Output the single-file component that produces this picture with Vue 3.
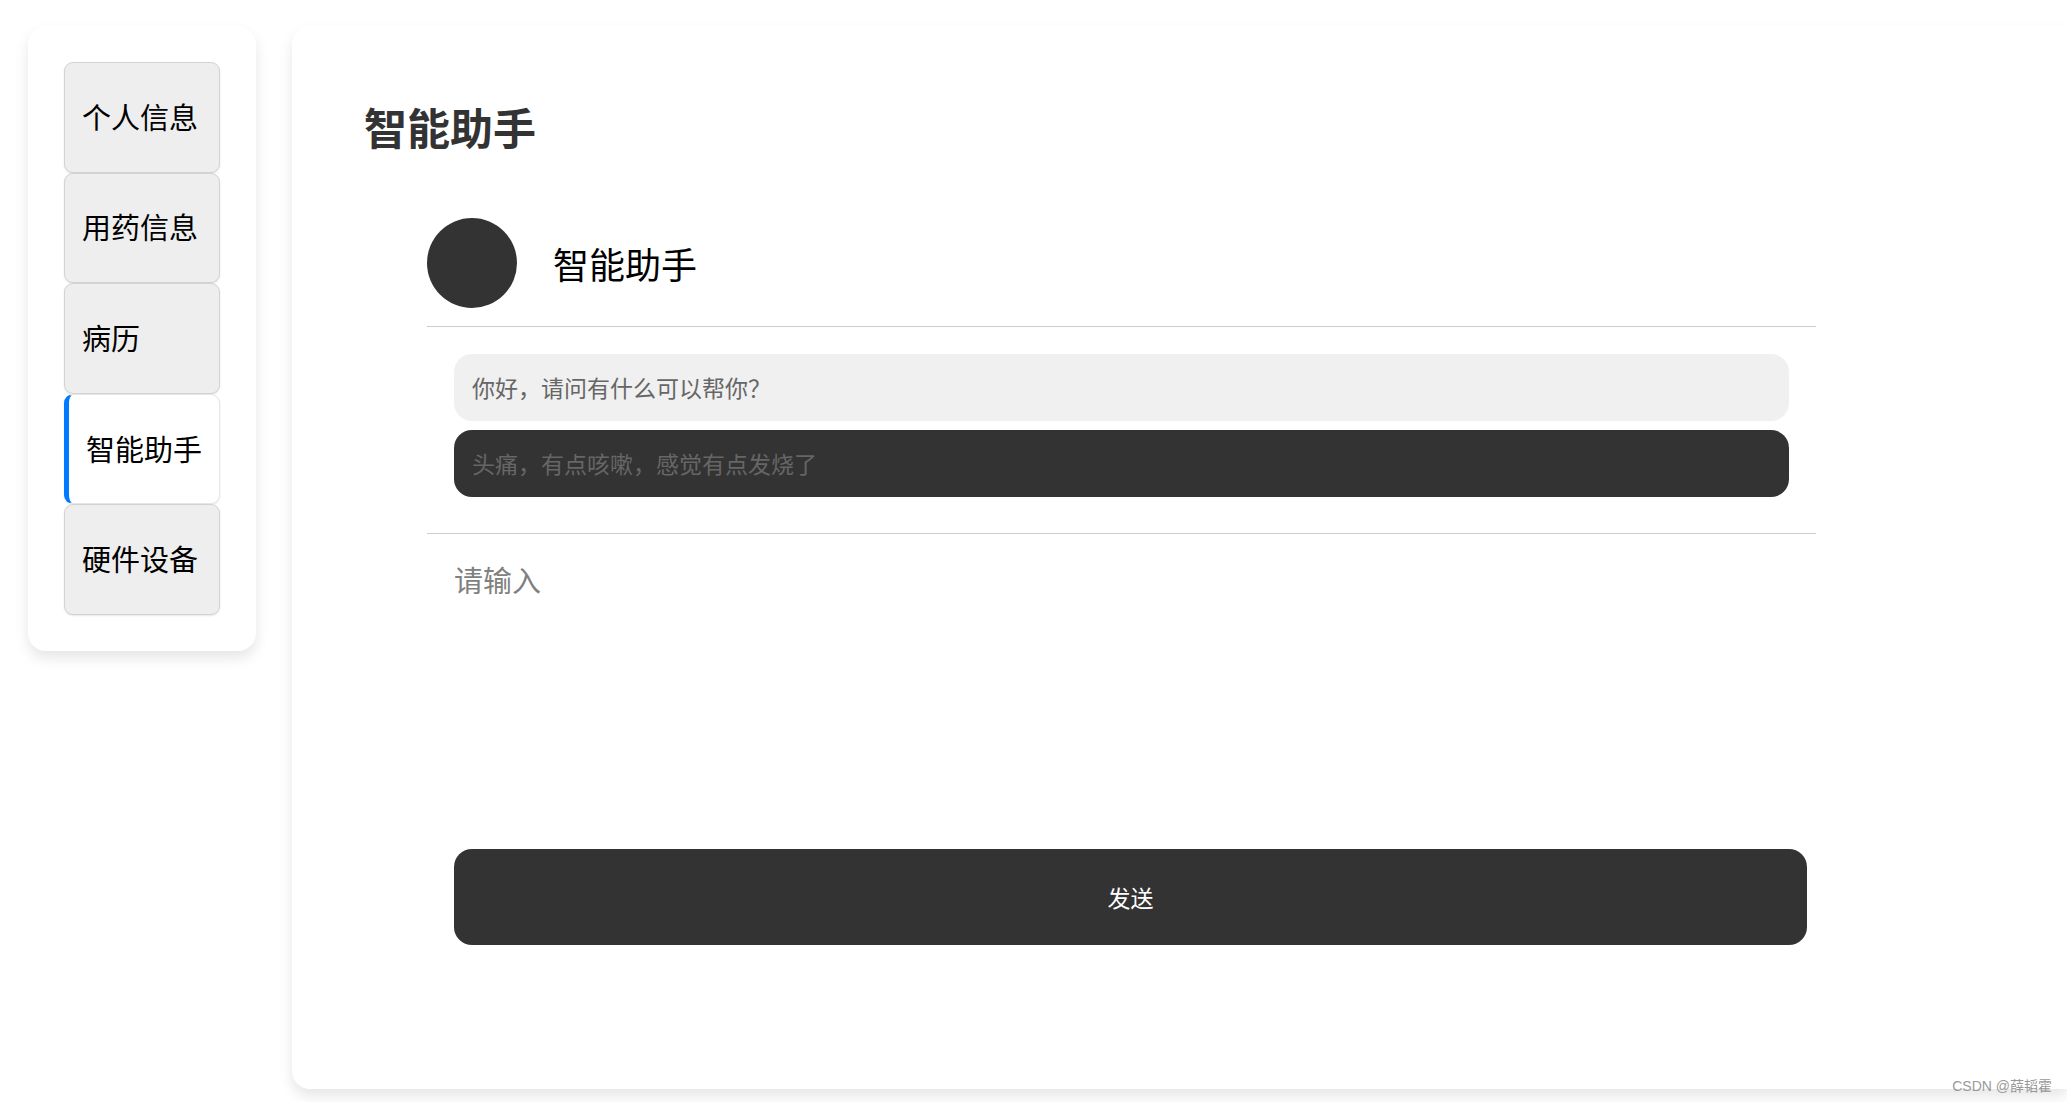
<script setup>
import { ref } from 'vue'

const sections = ['个人信息', '用药信息', '病历', '智能助手', '硬件设备']
const current = ref('智能助手')
const draft = ref('')
const messages = ref([
  { from: 'assistant', text: '你好，请问有什么可以帮你？' },
  { from: 'user', text: '头痛，有点咳嗽，感觉有点发烧了' },
])

function send() {
  const text = draft.value.trim()
  if (!text) return
  messages.value.push({ from: 'user', text })
  draft.value = ''
}
</script>

<template>
  <div class="page">
    <nav class="sidebar">
      <button
        v-for="name in sections"
        :key="name"
        type="button"
        class="tab"
        :class="{ active: name === current }"
        @click="current = name"
      >{{ name }}</button>
    </nav>

    <main class="panel">
      <h1 class="title">智能助手</h1>
      <section class="chat">
        <header class="chat-head">
          <span class="avatar"></span>
          <span class="chat-name">智能助手</span>
        </header>
        <div class="messages">
          <p v-for="(m, i) in messages" :key="i" class="bubble" :class="m.from">{{ m.text }}</p>
        </div>
        <form class="composer" @submit.prevent="send">
          <textarea v-model="draft" class="input" placeholder="请输入" aria-label="请输入"></textarea>
          <button type="submit" class="send">发送</button>
        </form>
      </section>
    </main>

    <span class="watermark">CSDN @薛韬霍</span>
  </div>
</template>

<style>
body {
  background: #fff;
}
</style>

<style scoped>
.page {
  position: relative;
  box-sizing: border-box;
  display: flex;
  align-items: flex-start;
  gap: 36px;
  min-height: 100vh;
  padding: 26px 0 13px 28px;
  overflow: hidden;
  font-family: "Noto Sans CJK SC", sans-serif;
  color: #000;
}

.sidebar,
.panel {
  box-sizing: border-box;
  background: #fff;
  box-shadow: 0 7px 14px rgba(0, 0, 0, 0.1);
}

.sidebar {
  flex: none;
  display: flex;
  flex-direction: column;
  width: 228px;
  min-height: 625px;
  padding: 36px;
  border-radius: 18px;
}

.tab {
  flex: 1;
  box-sizing: border-box;
  padding: 0 0 3px 17px;
  border: 1px solid #d3d3d3;
  border-radius: 9px;
  background: #eee;
  box-shadow: 0 1px 2px rgba(0, 0, 0, 0.1);
  font: inherit;
  font-size: 29px;
  line-height: 36px;
  text-align: left;
  white-space: nowrap;
  color: #000;
  cursor: pointer;
}

.tab.active {
  border-color: #e6e6e6;
  border-left: 5px solid #007bff;
  background: #fff;
}

.panel {
  flex: 1;
  align-self: stretch;
  padding: 72px 251px 72px 72px;
  border-radius: 18px 0 0 18px;
}

.title {
  margin: 0 0 63px;
  font-size: 43px;
  line-height: 57px;
  font-weight: 700;
  color: #333;
}

.chat {
  margin-left: 63px;
}

.chat-head {
  display: flex;
  align-items: center;
  gap: 36px;
  padding-bottom: 18px;
  border-bottom: 1px solid #ccc;
}

.avatar {
  width: 90px;
  height: 90px;
  border-radius: 50%;
  background: #333;
}

.chat-name {
  font-size: 36px;
  line-height: 54px;
}

.messages {
  display: flex;
  flex-direction: column;
  gap: 9px;
  padding: 27px 27px 36px;
  border-bottom: 1px solid #ccc;
}

.bubble {
  margin: 0;
  padding: 18px;
  border-radius: 18px;
  background: #f0f0f0;
  font-size: 23px;
  line-height: 31px;
  color: #666;
}

.bubble.user {
  background: #333;
}

.composer {
  display: flex;
  flex-direction: column;
  gap: 27px;
  padding: 27px 9px 0 27px;
}

.input {
  box-sizing: border-box;
  height: 261px;
  padding: 0;
  border: 0;
  outline: 0;
  resize: none;
  background: transparent;
  font: inherit;
  font-size: 29px;
  line-height: 36px;
}

.input::placeholder {
  color: #808080;
  opacity: 1;
}

.send {
  height: 96px;
  padding: 0;
  border: 0;
  border-radius: 18px;
  background: #333;
  font: inherit;
  font-size: 23px;
  line-height: 31px;
  color: #fff;
  cursor: pointer;
}

.watermark {
  position: absolute;
  right: 15px;
  bottom: 6px;
  font-family: "Liberation Sans", "Noto Sans CJK SC", sans-serif;
  font-size: 14px;
  line-height: 20px;
  color: #999;
}
</style>
